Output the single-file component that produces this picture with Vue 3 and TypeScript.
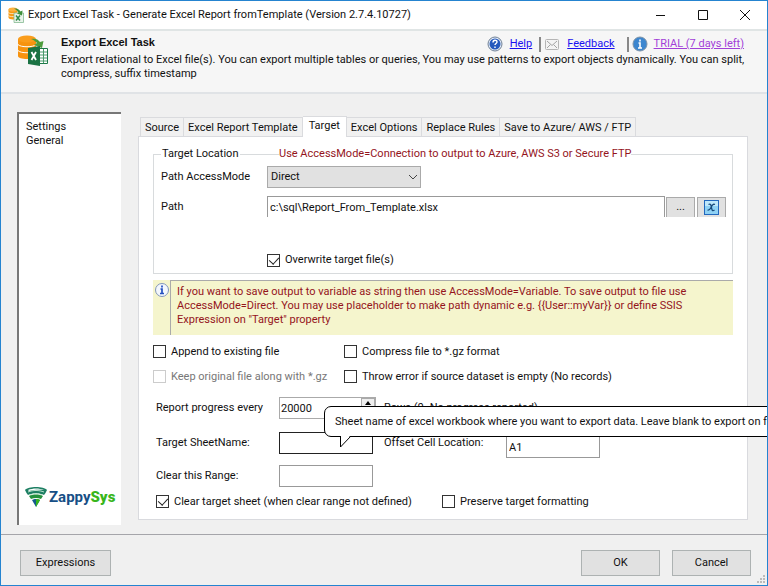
<script setup lang="ts">
import { ref } from 'vue'

const tabs: string[] = [
  'Source',
  'Excel Report Template',
  'Target',
  'Excel Options',
  'Replace Rules',
  'Save to Azure/ AWS / FTP',
]
const activeTab = ref('Target')
const accessMode = ref('Direct')
const path = ref('c:\\sql\\Report_From_Template.xlsx')
const overwrite = ref(true)
const append = ref(false)
const compress = ref(false)
const keepOriginal = ref(false)
const throwError = ref(false)
const progressEvery = ref(20000)
const sheetName = ref('')
const clearRange = ref('')
const offsetCell = ref('A1')
const clearSheet = ref(true)
const preserveFormat = ref(false)
</script>

<template>
  <div class="window">
    <header class="titlebar">
      <svg class="app-icon small" viewBox="0 0 32 32" aria-hidden="true">
        <path d="M1 5v16c0 2 4 4 9 4s9-2 9-4V5z" fill="#f79a12" />
        <ellipse cx="10" cy="5" rx="9" ry="4" fill="#fbb040" />
        <path d="M1 11c2 3 16 3 18 0M1 17c2 3 16 3 18 0" fill="none" stroke="#fff" stroke-width="1.4" />
        <path d="M12 12h19v19H12z" fill="#e9f3ea" stroke="#7fb58c" stroke-width="1.500" />
        <path d="M16 17l8 10M24 17l-8 10" stroke="#2c8a4c" stroke-width="3" />
        <path d="M12 3c7-1 11 2 13 6l4-2-1 10-10-4 3-2c-2-3-4-5-9-8z" fill="#3f8f3a" />
      </svg>
      <h1>Export Excel Task - Generate Excel Report fromTemplate (Version 2.7.4.10727)</h1>
      <div class="win-buttons">
        <button type="button" aria-label="Minimize">
          <svg viewBox="0 0 12 12"><path d="M1 6.500h9" stroke="#111" fill="none" /></svg>
        </button>
        <button type="button" aria-label="Maximize">
          <svg viewBox="0 0 12 12"><path d="M1.500 1.500h9v9h-9z" stroke="#111" fill="none" /></svg>
        </button>
        <button type="button" aria-label="Close">
          <svg viewBox="0 0 12 12"><path d="M1 1l10 10M11 1L1 11" stroke="#111" fill="none" /></svg>
        </button>
      </div>
    </header>

    <section class="banner">
      <svg class="app-icon" viewBox="0 0 32 32" aria-hidden="true">
        <path d="M1 4v17c0 2 4 3 9 3s9-1 9-3V4z" fill="#f7930f" />
        <ellipse cx="10" cy="4" rx="9" ry="3.500" fill="#fa9d1c" />
        <path d="M1 9.500c2 3 16 3 18 0M1 15.500c2 3 16 3 18 0" fill="none" stroke="#fff" stroke-width="1" />
        <path d="M14 4c4-1 7 0 9 3l3.500-1L25 13l-8-3 3-2c-2-2-3-3-6-4z" fill="#4d9c3d" />
        <path d="M21 13.500h9.500v15H21z" fill="#fff" stroke="#1d7a48" />
        <path d="M22 17h8M22 20h8M22 23h8M22 26h8M26.500 14v14" stroke="#4b9a6c" />
        <path d="M11 13l12-2v20l-12-2z" fill="#1a7243" />
        <path d="M14.500 17l4.500 8M19 17l-4.500 8" stroke="#fff" stroke-width="1.800" />
      </svg>
      <div class="banner-text">
        <div class="banner-top">
          <h2>Export Excel Task</h2>
          <nav>
            <svg class="nav-icon" viewBox="0 0 16 16" aria-hidden="true">
              <circle cx="8" cy="8" r="7" fill="#e4ecf5" stroke="#6f8096" />
              <circle cx="8" cy="8" r="5.500" fill="#2459bd" />
              <path d="M6 6.500c0-3 4-3 4-.5 0 1.500-2 1.500-2 3M8 10.500v1.500" fill="none" stroke="#fff" stroke-width="1.400" />
            </svg>
            <a class="help" href="#help">Help</a>
            <i class="divider"></i>
            <svg class="nav-icon" viewBox="0 0 16 16" aria-hidden="true">
              <rect x="1.500" y="3.500" width="13" height="10" rx="1" fill="#f4f4f4" stroke="#b5b5b5" />
              <path d="M3 5l5 4.500L13 5M3 12l3.500-3.500M13 12L9.500 8.500" fill="none" stroke="#a5a5a5" />
            </svg>
            <a class="feedback" href="#feedback">Feedback</a>
            <i class="divider"></i>
            <svg class="nav-icon" viewBox="0 0 16 16" aria-hidden="true">
              <circle cx="8" cy="8" r="7" fill="#3c86cf" stroke="#7d93a8" />
              <path d="M8 3.500v2M6.500 7H8v5M6 12h4" fill="none" stroke="#fff" stroke-width="1.600" />
            </svg>
            <a class="trial" href="#trial">TRIAL (7 days left)</a>
          </nav>
        </div>
        <p>
          Export relational to Excel file(s). You can export multiple tables or queries, You may use
          patterns to export objects dynamically. You can split, compress, suffix timestamp
        </p>
      </div>
    </section>

    <main>
      <aside>
        <ul>
          <li>Settings</li>
          <li>General</li>
        </ul>
        <div class="brand">
          <svg viewBox="0 0 22 20" aria-hidden="true">
            <path d="M0 3c3-4 19-4 22 0-1 2-2 4-3 5-4-2-12-2-16 0C2 7 1 5 0 3z" fill="#1d7f63" />
            <path d="M3 3c5-2 11-2 16 0-5-.5-10-.5-15 1z" fill="#fff" />
            <path d="M3 5c5-2 11-2 16 0M5 8c4-2 8-2 12 0" fill="none" stroke="#bfe3cf" />
            <path d="M4 9c4-2 10-2 14 0l-2 3c-3-1.500-7-1.500-10 0z" fill="#24913c" />
            <path d="M7 13c2-1.500 6-1.500 8 0l-4 7z" fill="#155a8c" />
            <path d="M11 12c2 0 3 0 4 1l-4 7z" fill="#35b51c" />
          </svg>
          <span>Zappy<b>Sys</b></span>
        </div>
      </aside>

      <div class="content">
        <div class="tabs" role="tablist">
          <button
            v-for="tab in tabs"
            :key="tab"
            type="button"
            role="tab"
            :aria-selected="tab === activeTab"
            :class="{ active: tab === activeTab }"
            @click="activeTab = tab"
          >
            {{ tab }}
          </button>
        </div>

        <form class="panel" @submit.prevent>
          <fieldset>
            <legend>Target Location</legend>
            <p class="hint">Use AccessMode=Connection to output to Azure, AWS S3 or Secure FTP</p>
            <div class="loc-row">
              <label for="mode">Path AccessMode</label>
              <div class="select">
                <select id="mode" v-model="accessMode">
                  <option>Direct</option>
                  <option>Connection</option>
                  <option>Variable</option>
                </select>
                <svg viewBox="0 0 10 6" aria-hidden="true"><path d="M1 1l4 4 4-4" fill="none" stroke="#444" /></svg>
              </div>
            </div>
            <div class="loc-row path-row">
              <label for="path">Path</label>
              <input id="path" v-model="path" type="text" />
              <button type="button" class="mini">...</button>
              <button type="button" class="mini" aria-label="Edit expression">
                <svg viewBox="0 0 15 15">
                  <rect x=".5" y=".5" width="14" height="14" fill="#8fd2f5" stroke="#2368bd" />
                  <path d="M1 1h13v5H1z" fill="#bfe8fb" />
                  <path d="M4.500 4.500c2-1 2.500 0 3 3s1 4 3 2.500M11 4.500c-2-1-3 1-4 3s-2 3-3.500 2.500" fill="none" stroke="#174a7c" stroke-width="1.300" />
                </svg>
              </button>
            </div>
            <label class="check overwrite"><input v-model="overwrite" type="checkbox" />Overwrite target file(s)</label>
          </fieldset>

          <div class="notice">
            <svg viewBox="0 0 16 16" aria-hidden="true">
              <circle cx="8" cy="8" r="6.500" fill="#f3f7fd" stroke="#8296ba" />
              <path d="M8 3.500v2M6.500 7H8v4.500M6 11.500h4" fill="none" stroke="#2350c0" stroke-width="1.700" />
            </svg>
            <p>
              If you want to save output to variable as string then use AccessMode=Variable. To save
              output to file use AccessMode=Direct. You may use placeholder to make path dynamic e.g.
              &#123;&#123;User::myVar&#125;&#125; or define SSIS Expression on "Target" property
            </p>
          </div>

          <div class="checks">
            <label class="check"><input v-model="append" type="checkbox" />Append to existing file</label>
            <label class="check"><input v-model="compress" type="checkbox" />Compress file to *.gz format</label>
            <label class="check off"><input v-model="keepOriginal" type="checkbox" disabled />Keep original file along with *.gz</label>
            <label class="check"><input v-model="throwError" type="checkbox" />Throw error if source dataset is empty (No records)</label>
          </div>

          <div class="fields">
            <label for="every">Report progress every</label>
            <div class="spin">
              <input id="every" v-model="progressEvery" type="text" />
              <div class="arrows">
                <button type="button" aria-label="Increase" @click="progressEvery++">
                  <svg viewBox="0 0 8 5"><path d="M4 0l3 4H1z" /></svg>
                </button>
                <button type="button" aria-label="Decrease" @click="progressEvery--">
                  <svg viewBox="0 0 8 5"><path d="M4 4l3-4H1z" /></svg>
                </button>
              </div>
            </div>
            <span class="wide">Rows (0=No progress reported)</span>

            <label for="sheet">Target SheetName:</label>
            <div class="anchor">
              <input id="sheet" v-model="sheetName" type="text" class="focus" />
              <div class="tip" role="tooltip">
                Sheet name of excel workbook where you want to export data. Leave blank to export on first sheet
                <svg viewBox="0 0 14 14" aria-hidden="true">
                  <path d="M1 0v11L12 0z" fill="#fff" />
                  <path d="M1.500 1v11L12 1" fill="none" stroke="#000" />
                </svg>
              </div>
            </div>
            <label for="offset">Offset Cell Location:</label>
            <input id="offset" v-model="offsetCell" type="text" />

            <label for="range">Clear this Range:</label>
            <input id="range" v-model="clearRange" type="text" />
          </div>

          <div class="checks last">
            <label class="check"><input v-model="clearSheet" type="checkbox" />Clear target sheet (when clear range not defined)</label>
            <label class="check"><input v-model="preserveFormat" type="checkbox" />Preserve target formatting</label>
          </div>
        </form>
      </div>
    </main>

    <footer>
      <button type="button" class="expr">Expressions</button>
      <button type="button">OK</button>
      <button type="button">Cancel</button>
      <svg class="grip" viewBox="0 0 9 9" aria-hidden="true">
        <path d="M6 0h2v2H6zM3 3h2v2H3zM6 3h2v2H6zM0 6h2v2H0zM3 6h2v2H3zM6 6h2v2H6z" fill="#bbb" />
      </svg>
    </footer>
  </div>
</template>

<style>
body {
  margin: 0;
}
</style>

<style scoped>
* {
  box-sizing: border-box;
}
.window {
  position: relative;
  display: flex;
  flex-direction: column;
  min-height: 100vh;
  overflow: hidden;
  border: 1px solid #2584d0;
  background: #f0f0f0;
  color: #111;
  font-family: Roboto, 'Open Sans', sans-serif;
  font-size: 11px;
  line-height: 14px;
}
h1,
h2,
p,
ul {
  margin: 0;
  padding: 0;
  font-size: inherit;
}
button,
input,
select {
  margin: 0;
  padding: 0;
  border: 0;
  border-radius: 0;
  font: inherit;
  color: inherit;
  outline: 0;
}
.titlebar {
  display: flex;
  align-items: center;
  height: 30px;
  padding: 0 1px 0 7px;
  border-bottom: 2px solid #e0e5e5;
  background: #fff;
}
.app-icon {
  flex: none;
  width: 32px;
  height: 32px;
}
.app-icon.small {
  width: 16px;
  height: 16px;
}
h1 {
  flex: 1;
  margin-left: 4px;
  font-weight: 400;
}
.win-buttons {
  display: flex;
}
.win-buttons button {
  width: 42px;
  height: 28px;
  background: none;
}
.win-buttons svg {
  display: block;
  width: 12px;
  height: 12px;
  margin: auto;
}
.banner {
  display: flex;
  gap: 12px;
  height: 63px;
  padding: 4px 8px 0 16px;
  border-bottom: 2px solid #e0e3e6;
  background: #f6f6f6;
}
.banner-text {
  flex: 1;
}
.banner-top {
  display: flex;
  justify-content: space-between;
  height: 18px;
}
h2 {
  line-height: 14px;
  font-family: 'Liberation Sans', sans-serif;
  font-weight: 700;
}
nav {
  display: flex;
  align-items: center;
  padding-right: 15px;
}
nav a {
  color: #1a10f0;
}
nav a.trial {
  margin-left: 6px;
  color: #a23fd8;
}
.help {
  margin: 0 7px;
}
.feedback {
  margin: 0 12px 0 7px;
}
.divider {
  width: 2px;
  height: 15px;
  margin-right: 3px;
  background: #888;
}
.nav-icon {
  width: 16px;
  height: 16px;
}
main {
  flex: 1;
  display: flex;
  gap: 17px;
  padding: 18px 19px 9px 16px;
}
aside {
  display: flex;
  flex-direction: column;
  justify-content: space-between;
  flex: none;
  width: 104px;
  padding: 6px 0 16px;
  border-top: 2px solid #777;
  border-left: 2px solid #777;
  background: #fff;
}
ul {
  padding-left: 7px;
  list-style: none;
}
.brand {
  display: flex;
  align-items: center;
  gap: 2px;
  padding-left: 6px;
  color: #174f86;
  font-family: 'Roboto', sans-serif;
  font-size: 15px;
  font-weight: 700;
  line-height: 24px;
}
.brand b {
  color: #38b61b;
}
.brand svg {
  flex: none;
  width: 22px;
  height: 20px;
}
.content {
  flex: 1;
  display: flex;
  flex-direction: column;
  margin-bottom: 5px;
  padding-top: 4px;
}
.tabs {
  display: flex;
  align-items: flex-end;
  padding-left: 2px;
}
.tabs button {
  height: 19px;
  padding: 1px 4px 0;
  border: 1px solid #dadbde;
  border-bottom: 0;
  border-left-width: 0;
  background: #f1f1f1;
  white-space: nowrap;
}
.tabs button:first-child {
  border-left-width: 1px;
}
.tabs button.active {
  z-index: 1;
  height: 21px;
  margin-bottom: -1px;
  padding: 0 6px 2px;
  background: #fff;
}
.panel {
  flex: 1;
  padding: 10px 14px 3px;
  border: 1px solid #d9dade;
  background: #fff;
}
fieldset {
  position: relative;
  min-width: 0;
  height: 127px;
  margin: 0;
  padding: 5px 6px 0 7px;
  border: 1px solid #d8dbdd;
}
legend {
  padding: 0 2px 0 1px;
}
.hint {
  position: absolute;
  top: -14px;
  left: 125px;
  background: #fff;
  color: #94141c;
}
.loc-row {
  display: flex;
  align-items: center;
  height: 22px;
}
.loc-row > label {
  width: 106px;
}
.path-row {
  margin-top: 8px;
  height: 21px;
}
.select {
  position: relative;
}
select {
  display: block;
  width: 154px;
  height: 22px;
  padding-left: 3px;
  border: 1px solid #aaa;
  background: #e1e1e1;
  appearance: none;
}
.select svg {
  position: absolute;
  top: 8px;
  right: 3px;
  width: 10px;
  height: 6px;
  pointer-events: none;
}
input[type='text'] {
  width: 94px;
  height: 22px;
  padding: 0 2px;
  border: 1px solid #999;
  background: #fff;
}
.path-row input[type='text'] {
  flex: 1;
  min-width: 0;
  height: 21px;
  border-bottom: 0;
}
.mini {
  width: 29px;
  height: 20px;
  margin-left: 1px;
  border: 1px solid #aaa;
  border-bottom: 0;
  background: #e1e1e1;
}
.mini:last-child {
  margin-left: 2px;
}
.mini svg {
  display: block;
  width: 15px;
  height: 15px;
  margin: auto;
}
.check {
  display: flex;
  align-items: center;
  gap: 5px;
  white-space: nowrap;
}
.check input {
  position: relative;
  flex: none;
  width: 13px;
  height: 13px;
  border: 1px solid #333;
  background: #fff;
  appearance: none;
}
.check input:checked::after {
  content: '';
  position: absolute;
  top: 0;
  left: 3px;
  width: 5px;
  height: 8px;
  border: solid #222;
  border-width: 0 1px 1px 0;
  transform: rotate(42deg);
}
.check.off {
  color: #777;
}
.check.off input {
  border-color: #ccc;
}
.overwrite {
  margin: 36px 0 0 106px;
}
.notice {
  display: flex;
  min-height: 55px;
  margin-top: 6px;
  background: #f5f5cd;
  color: #94141c;
}
.notice svg {
  flex: none;
  width: 16px;
  height: 16px;
  margin: 2px 0 0 1px;
}
.notice p {
  flex: 1;
  padding: 4px 40px 0 6px;
  border-top: 1px solid #aaa;
  border-left: 1px solid #aaa;
}
.checks {
  display: grid;
  grid-template-columns: 191px 1fr;
  grid-auto-rows: 25px;
  margin-top: 4px;
}
.fields {
  display: grid;
  grid-template-columns: 123px 94px 133px 94px;
  grid-template-rows: 28px 30px 24px;
  row-gap: 6px;
  align-items: center;
  margin: 5px 0 0 3px;
}
.fields > label:nth-of-type(3),
.wide {
  padding-left: 11px;
}
.wide {
  grid-column: 3 / 5;
}
#offset {
  align-self: end;
}
.spin {
  display: flex;
  width: 97px;
  height: 22px;
  border: 1px solid #aaa;
}
.spin input[type='text'] {
  flex: 1;
  min-width: 0;
  height: 20px;
  padding-left: 1px;
  border: 0;
}
.arrows {
  display: flex;
  flex-direction: column;
}
.arrows button {
  flex: 1;
  width: 14px;
  border: 1px solid #aaa;
  background: #eee;
}
.arrows svg {
  display: block;
  width: 8px;
  height: 5px;
  margin: auto;
}
.anchor {
  position: relative;
}
.focus[type='text'] {
  display: block;
  border-color: #222;
}
.tip {
  position: absolute;
  z-index: 2;
  top: -26px;
  left: 45px;
  padding: 8px 10px 7px;
  border: 1px solid #000;
  border-radius: 7px;
  background: #fff;
  white-space: nowrap;
}
.tip svg {
  position: absolute;
  top: 28px;
  left: 14px;
  width: 14px;
  height: 14px;
}
.checks.last {
  grid-template-columns: 286px 1fr;
  margin: 1px 0 0 3px;
}
footer {
  position: relative;
  display: flex;
  gap: 12px;
  height: 51px;
  padding: 15px 16px 0 19px;
  border-top: 1px solid #a5a5aa;
}
footer button {
  width: 79px;
  height: 26px;
  border: 1px solid #adb2b2;
  background: #e1e1e1;
}
.expr {
  width: 91px;
  margin-right: auto;
}
.grip {
  position: absolute;
  right: 1px;
  bottom: 1px;
  width: 9px;
  height: 9px;
}
</style>
